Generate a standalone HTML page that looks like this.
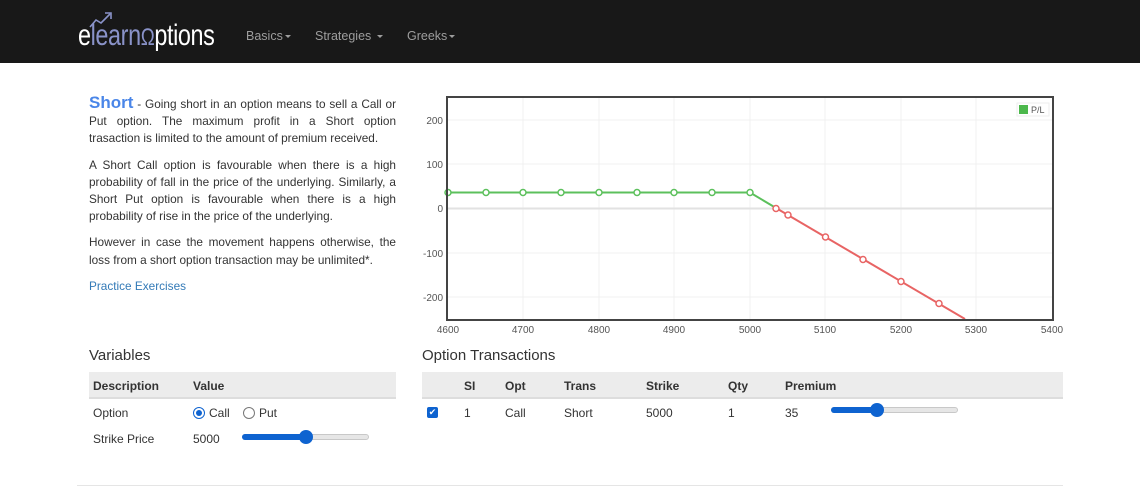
<!DOCTYPE html>
<html><head><meta charset="utf-8"><style>
*{margin:0;padding:0;box-sizing:border-box}
body{width:1140px;height:487px;overflow:hidden;background:#fff;font-family:"Liberation Sans",Arial,sans-serif;color:#333;position:relative}
.nav{position:absolute;left:0;top:0;width:1140px;height:63px;background:#181818}
.logo{position:absolute;left:78px;top:19px;font-family:"Liberation Sans Narrow","Liberation Sans",sans-serif;font-size:30px;color:#fff;letter-spacing:-0.5px;transform:scaleX(0.78);transform-origin:left top;white-space:nowrap}
.logo .b{color:#8a93c9}
.logo .o{color:#8a93c9;font-size:24px}
.menu{position:absolute;top:29px;font-size:12.5px;color:#9d9d9d}
.menu i{display:inline-block;width:0;height:0;border-left:3.5px solid transparent;border-right:3.5px solid transparent;border-top:3.5px solid #9d9d9d;vertical-align:middle;margin-left:2px}
.txt{position:absolute;left:89px;top:94px;width:307px;font-size:11.8px;line-height:17.2px;text-align:justify}
.txt p{margin-bottom:9px}
.txt b{color:#4a86e8;font-size:17px;font-weight:bold}
.txt a{color:#337ab7;text-decoration:none}
h3{position:absolute;font-weight:normal;font-size:15px;color:#333}
.th{position:absolute;height:27px;background:#ececec;border-bottom:2px solid #ddd;font-size:12px;font-weight:bold}
.th span,.row span{position:absolute;top:7px}
.row span{top:0}
.row{position:absolute;font-size:12px}
.slider{position:absolute;height:6px;border-radius:3px;background:#e6e6e6;border:1px solid #c8c8c8}
.slider .f{position:absolute;left:-1px;top:-1px;height:6px;border-radius:3px;background:#0e63d0}
.slider .k{position:absolute;top:-5px;width:14px;height:14px;border-radius:50%;background:#0e63d0}
.radio{position:absolute;width:12px;height:12px;border-radius:50%;border:1px solid #777;background:#fff}
</style></head><body>
<div class="nav">
<div class="logo">e<span class="b">learn</span><span class="o">Ω</span>ptions</div>
<svg style="position:absolute;left:88px;top:11px" width="26" height="18"><path d="M2 16 L8 9 L13 12 L22 3" stroke="#8a93c9" stroke-width="1.6" fill="none"/><path d="M17 2 L23 2 L23 8" stroke="#8a93c9" stroke-width="1.6" fill="none"/></svg>
<div class="menu" style="left:246px">Basics<i></i></div>
<div class="menu" style="left:315px">Strategies <i></i></div>
<div class="menu" style="left:407px">Greeks<i></i></div>
</div>
<div class="txt">
<p><b>Short</b> - Going short in an option means to sell a Call or Put option. The maximum profit in a Short option trasaction is limited to the amount of premium received.</p>
<p>A Short Call option is favourable when there is a high probability of fall in the price of the underlying. Similarly, a Short Put option is favourable when there is a high probability of rise in the price of the underlying.</p>
<p>However in case the movement happens otherwise, the loss from a short option transaction may be unlimited*.</p>
<p><a>Practice Exercises</a></p>
</div>
<svg style="position:absolute;left:410px;top:90px" width="660" height="250" font-family="Liberation Sans,sans-serif" font-size="10" fill="#555">
<g transform="translate(-410,-90)">
<g stroke="#f0f0f0" stroke-width="1">
<line x1="523" y1="97" x2="523" y2="320"/><line x1="599" y1="97" x2="599" y2="320"/><line x1="674" y1="97" x2="674" y2="320"/><line x1="750" y1="97" x2="750" y2="320"/><line x1="825" y1="97" x2="825" y2="320"/><line x1="901" y1="97" x2="901" y2="320"/><line x1="976" y1="97" x2="976" y2="320"/>
<line x1="447" y1="120" x2="1053" y2="120"/><line x1="447" y1="164" x2="1053" y2="164"/><line x1="447" y1="253" x2="1053" y2="253"/><line x1="447" y1="297" x2="1053" y2="297"/>
</g>
<line x1="447" y1="208.5" x2="1053" y2="208.5" stroke="#e2e2e2" stroke-width="2"/>
<polyline points="448,192.5 750,192.5 776,208" stroke="#5cc05c" stroke-width="2" fill="none"/>
<polyline points="776,208 965,319" stroke="#e86464" stroke-width="2" fill="none"/>
<g stroke="#5cc05c" stroke-width="1.5" fill="#fff">
<circle cx="448" cy="192.5" r="3"/><circle cx="486" cy="192.5" r="3"/><circle cx="523" cy="192.5" r="3"/><circle cx="561" cy="192.5" r="3"/><circle cx="599" cy="192.5" r="3"/><circle cx="637" cy="192.5" r="3"/><circle cx="674" cy="192.5" r="3"/><circle cx="712" cy="192.5" r="3"/><circle cx="750" cy="192.5" r="3"/></g>
<g stroke="#e86464" stroke-width="1.5" fill="#fff">
<circle cx="776" cy="208.5" r="3"/><circle cx="788" cy="215" r="3"/><circle cx="825.5" cy="237" r="3"/><circle cx="863" cy="259.5" r="3"/><circle cx="901" cy="281.5" r="3"/><circle cx="939" cy="303.5" r="3"/></g>
<rect x="447" y="97" width="606" height="223" fill="none" stroke="#444" stroke-width="2"/>
<rect x="1017" y="103" width="32" height="13" fill="#fff" stroke="#eee"/>
<rect x="1019" y="105" width="9" height="9" fill="#4cb84c"/>
<text x="1031" y="113" font-size="9">P/L</text>
<g text-anchor="end"><text x="443" y="124">200</text><text x="443" y="168">100</text><text x="443" y="212">0</text><text x="443" y="257">-100</text><text x="443" y="301">-200</text></g>
<g text-anchor="middle"><text x="448" y="333">4600</text><text x="523" y="333">4700</text><text x="599" y="333">4800</text><text x="674" y="333">4900</text><text x="750" y="333">5000</text><text x="825" y="333">5100</text><text x="901" y="333">5200</text><text x="976" y="333">5300</text><text x="1052" y="333">5400</text></g>
</g></svg>
<h3 style="left:89px;top:347px">Variables</h3>
<h3 style="left:422px;top:347px">Option Transactions</h3>
<div class="th" style="left:89px;top:372px;width:307px"><span style="left:4px">Description</span><span style="left:104px">Value</span></div>
<div class="row" style="left:89px;top:406px;width:307px;height:20px"><span style="left:4px">Option</span>
<div class="radio" style="left:104px;top:1px;border-color:#0e63d0"><div style="position:absolute;left:2px;top:2px;width:6px;height:6px;border-radius:50%;background:#0e63d0"></div></div>
<span style="left:120px">Call</span><div class="radio" style="left:154px;top:1px"></div><span style="left:170px">Put</span></div>
<div class="row" style="left:89px;top:432px;width:307px"><span style="left:4px">Strike Price</span><span style="left:104px">5000</span></div>
<div class="slider" style="left:242px;top:434px;width:127px"><div class="f" style="width:64px"></div><div class="k" style="left:56px"></div></div>
<div class="th" style="left:422px;top:372px;width:641px"><span style="left:42px">SI</span><span style="left:83px">Opt</span><span style="left:142px">Trans</span><span style="left:224px">Strike</span><span style="left:306px">Qty</span><span style="left:363px">Premium</span></div>
<div class="row" style="left:422px;top:406px;width:641px"><div style="position:absolute;left:5px;top:1px;width:11px;height:11px;border-radius:2px;background:#0e63d0;color:#fff;font-size:9px;line-height:11px;text-align:center">✔</div>
<span style="left:42px">1</span><span style="left:83px">Call</span><span style="left:142px">Short</span><span style="left:224px">5000</span><span style="left:306px">1</span><span style="left:363px">35</span></div>
<div class="slider" style="left:831px;top:407px;width:127px"><div class="f" style="width:46px"></div><div class="k" style="left:38px"></div></div>
<div style="position:absolute;left:77px;top:485px;width:986px;height:1px;background:#e5e5e5"></div>
</body></html>
